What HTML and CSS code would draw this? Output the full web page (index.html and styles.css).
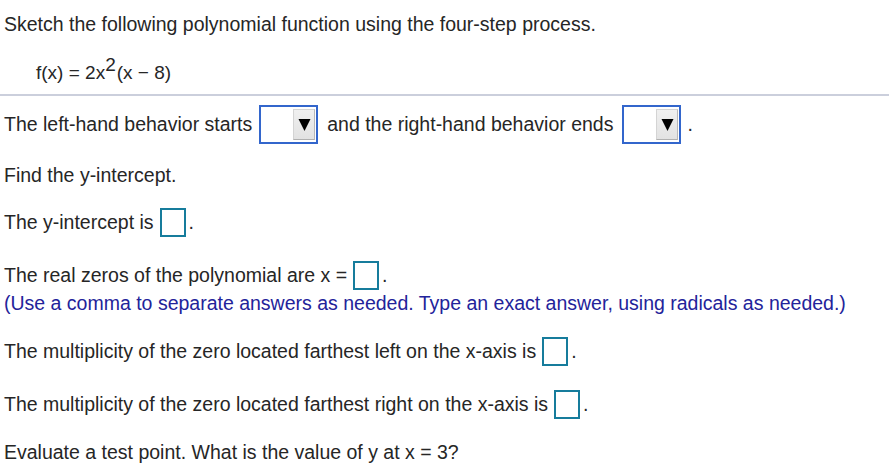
FILE: index.html
```html
<!DOCTYPE html>
<html>
<head>
<meta charset="utf-8">
<link rel="stylesheet" href="styles.css">
</head>
<body>
<div class="page">
  <div class="intro">Sketch the following polynomial function using the four-step process.</div>
  <div class="formula">f(x) = 2x<sup class="sup">2</sup>(x − 8)</div>
  <hr class="divider">
  <div class="row row-behavior">
    <span>The left-hand behavior starts</span>
    <span class="select select-first"><span class="arrow"><svg width="13" height="14" viewBox="0 0 13 14"><polygon points="0.5,1 12.5,1 6.5,13" fill="#000"/></svg></span></span>
    <span>and the right-hand behavior ends</span>
    <span class="select"><span class="arrow"><svg width="13" height="14" viewBox="0 0 13 14"><polygon points="0.5,1 12.5,1 6.5,13" fill="#000"/></svg></span></span><span class="dot">.</span>
  </div>
  <div class="row row-find">Find the y-intercept.</div>
  <div class="row row-yint"><span>The y-intercept is</span><span class="box"></span><span>.</span></div>
  <div class="row row-zeros"><span>The real zeros of the polynomial are x =</span><span class="box"></span><span>.</span></div>
  <div class="hint">(Use a comma to separate answers as needed. Type an exact answer, using radicals as needed.)</div>
  <div class="row row-mleft"><span>The multiplicity of the zero located farthest left on the x-axis is</span><span class="box"></span><span>.</span></div>
  <div class="row row-mright"><span>The multiplicity of the zero located farthest right on the x-axis is</span><span class="box"></span><span>.</span></div>
  <div class="row row-eval">Evaluate a test point. What is the value of y at x = 3?</div>
</div>
</body>
</html>
```
FILE: styles.css
```css
html, body {
  margin: 0;
  padding: 0;
  background: #fff;
}
.page {
  font-family: "Liberation Sans", Arial, sans-serif;
  font-size: 19.5px;
  color: #262626;
  padding: 12px 0 0 4px;
}
.intro {
  line-height: 24px;
  height: 24px;
}
.formula {
  font-size: 19px;
  margin: 25px 0 0 32px;
  line-height: 24px;
  height: 24px;
}
.sup {
  font-size: 19px;
  vertical-align: 8px;
  line-height: 0;
  margin-right: 1px;
}
.divider {
  border: 0;
  height: 2px;
  background: #cbcfdc;
  margin: 9px 0 0 -4px;
}
.row {
  display: flex;
  align-items: center;
  white-space: nowrap;
}
.row-behavior {
  margin-top: 9px;
  height: 39px;
}
.select {
  box-sizing: border-box;
  width: 59px;
  height: 39px;
  border: 2px solid #3366cc;
  margin: 0 9px 0 9px;
  display: flex;
  align-items: center;
  justify-content: flex-end;
  padding-right: 1px;
}
.select-first {
  margin-left: 7px;
}
.arrow {
  box-sizing: border-box;
  width: 22px;
  height: 31px;
  background: linear-gradient(#f0f0f0, #e2e2e2);
  border: 1px solid #d4d4d4;
  border-right-color: #b8b8b8;
  border-bottom-color: #b0b0b0;
  display: flex;
  align-items: center;
  justify-content: center;
}
.dot {
  margin-left: -3px;
}
.row-find {
  margin-top: 19px;
  height: 24px;
}
.row-yint {
  margin-top: 21px;
  height: 29px;
}
.box {
  box-sizing: border-box;
  display: inline-block;
  width: 26px;
  height: 29px;
  border: 2px solid #167c9c;
  margin: 0 3px 0 6px;
}
.row-zeros {
  margin-top: 24px;
  height: 29px;
}
.hint {
  color: #23239a;
  line-height: 24px;
  height: 24px;
  margin-top: 1px;
}
.row-mleft {
  margin-top: 22px;
  height: 29px;
}
.row-mright {
  margin-top: 24px;
  height: 29px;
}
.row-eval {
  margin-top: 21px;
  height: 24px;
}
```
